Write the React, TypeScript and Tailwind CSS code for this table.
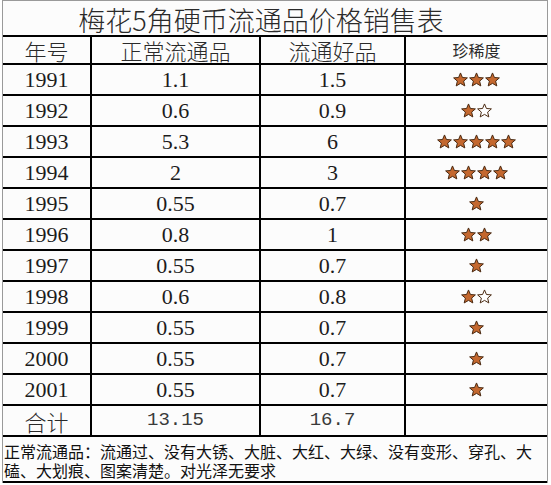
const rows: [string, string, string, number, number][] = [
  ["1991", "1.1", "1.5", 3, 0],
  ["1992", "0.6", "0.9", 1, 1],
  ["1993", "5.3", "6", 5, 0],
  ["1994", "2", "3", 4, 0],
  ["1995", "0.55", "0.7", 1, 0],
  ["1996", "0.8", "1", 2, 0],
  ["1997", "0.55", "0.7", 1, 0],
  ["1998", "0.6", "0.8", 1, 1],
  ["1999", "0.55", "0.7", 1, 0],
  ["2000", "0.55", "0.7", 1, 0],
  ["2001", "0.55", "0.7", 1, 0],
];

const cjk = "font-['Noto_Sans_CJK_SC',sans-serif]";
const serif = "font-['Liberation_Serif','Noto_Sans_CJK_SC',serif]";

const Star = ({ filled }: { filled: boolean }) => (
  <svg width="15" height="15" viewBox="0 0 24 24">
    <path
      d="M12 1.5l3.1 7.3 7.9.6-6 5.2 1.9 7.7L12 18.2l-6.9 4.1 1.9-7.7-6-5.2 7.9-.6z"
      fill={filled ? "#c4682f" : "#ffffff"}
      stroke="#4a2a12"
      strokeWidth="1.6"
      strokeLinejoin="round"
    />
  </svg>
);

const Cell = ({ children, last, className = "" }: { children?: React.ReactNode; last?: boolean; className?: string }) => (
  <div className={`flex items-center justify-center border-b-2 border-black leading-none ${last ? "" : "border-r-2"} ${className}`}>
    {children}
  </div>
);

export default function App() {
  return (
    <div className="h-[485px] w-[551px] bg-white">
      <div className="ml-[2px] w-[546px] border-x border-t border-[#9a9a9a] bg-[#fcfcfc]">
        <div className={`flex h-[36px] items-center justify-center border-b-2 border-black pt-[2px] pr-7 text-[27px] font-light leading-none text-[#2a2a2a] ${cjk}`}>
          梅花5角硬币流通品价格销售表
        </div>
        <div className="grid grid-cols-[89px_169px_145px_141px] grid-rows-[28px_repeat(12,31px)] text-[#1c1c1c]">
          <Cell className={`text-[22px] font-light text-[#2a2a2a] ${cjk}`}>年号</Cell>
          <Cell className={`text-[22px] font-light text-[#2a2a2a] ${cjk}`}>正常流通品</Cell>
          <Cell className={`text-[22px] font-light text-[#2a2a2a] ${cjk}`}>流通好品</Cell>
          <Cell last className={`text-[16px] text-[#2a2a2a] ${cjk}`}>珍稀度</Cell>
          {rows.map(([y, a, b, full, empty]) => (
            <div key={y} className="contents">
              <Cell className={`text-[22px] ${serif}`}>{y}</Cell>
              <Cell className={`text-[22px] ${serif}`}>{a}</Cell>
              <Cell className={`text-[22px] ${serif}`}>{b}</Cell>
              <Cell last>
                <div className="flex gap-px">
                  {Array.from({ length: full }, (_, i) => (
                    <Star key={`f${i}`} filled />
                  ))}
                  {Array.from({ length: empty }, (_, i) => (
                    <Star key={`e${i}`} filled={false} />
                  ))}
                </div>
              </Cell>
            </div>
          ))}
          <Cell className={`text-[22px] font-light text-[#2a2a2a] ${cjk}`}>合计</Cell>
          <Cell className="font-['Liberation_Mono',monospace] text-[19px] text-[#3a3a3a]">13.15</Cell>
          <Cell className="font-['Liberation_Mono',monospace] text-[19px] text-[#3a3a3a]">16.7</Cell>
          <Cell last />
        </div>
        <div className={`h-[46px] border-b-2 border-black px-[1px] pt-[5px] text-[16px] leading-[19px] text-[#111] ${cjk}`}>
          正常流通品：流通过、没有大锈、大脏、大红、大绿、没有变形、穿孔、大磕、大划痕、图案清楚。对光泽无要求
        </div>
      </div>
    </div>
  );
}
